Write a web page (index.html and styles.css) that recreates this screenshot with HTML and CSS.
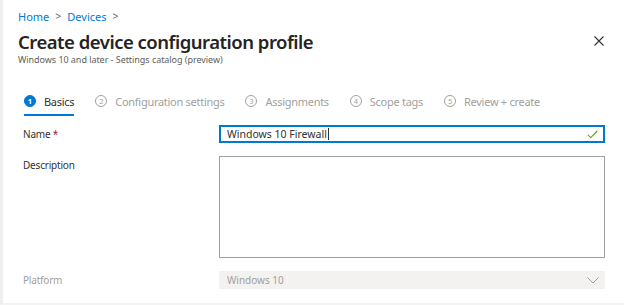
FILE: index.html
```html
<!doctype html>
<html>
	<head>
		<title>Create device configuration profile</title>
		<link rel="stylesheet" href="styles.css">
	</head>

	<body>
		<div class="blade">
			<nav class="crumbs">
				<a href="#">Home</a>
				<span class="sep">&gt;</span>
				<a href="#">Devices</a>
				<span class="sep">&gt;</span>
			</nav>

			<div class="blade-header">
				<div>
					<h1 class="title">Create device configuration profile</h1>
					<div class="subtitle">Windows 10 and later - Settings catalog (preview)</div>
				</div>
				<button class="close-button" aria-label="Close">
					<svg width="10" height="10" viewBox="0 0 10 10">
						<path d="M0.5 0.5 L9.5 9.5 M9.5 0.5 L0.5 9.5" stroke="#323130" stroke-width="1.1" fill="none"></path>
					</svg>
				</button>
			</div>

			<ul class="steps">
				<li class="step active"><span class="step-num">1</span>Basics</li>
				<li class="step"><span class="step-num">2</span>Configuration settings</li>
				<li class="step"><span class="step-num">3</span>Assignments</li>
				<li class="step"><span class="step-num">4</span>Scope tags</li>
				<li class="step"><span class="step-num">5</span>Review + create</li>
			</ul>

			<div class="form">
				<div class="form-row">
					<label class="field-label">Name <span class="req">*</span></label>
					<div class="text-input focused">
						<span class="value">Windows 10 Firewall</span><span class="caret"></span>
						<svg class="check" width="11" height="9" viewBox="0 0 11 9">
							<path d="M0.8 4.8 L3.8 7.6 L10.2 1" stroke="#57a300" stroke-width="1.1" fill="none"></path>
						</svg>
					</div>
				</div>
				<div class="form-row">
					<label class="field-label">Description</label>
					<div class="text-area"></div>
				</div>
				<div class="form-row">
					<label class="field-label disabled">Platform</label>
					<div class="dropdown disabled">
						<span>Windows 10</span>
						<svg width="12" height="7" viewBox="0 0 12 7">
							<path d="M0.5 0.5 L6 6 L11.5 0.5" stroke="#a19f9d" stroke-width="1" fill="none"></path>
						</svg>
					</div>
				</div>
			</div>
		</div>
	</body>
</html>
```

FILE: styles.css
```css
body {
	margin: 0px;
	background-color: #ffffff;
	color: #323130;
	font-family: "Noto Sans", "Open Sans", sans-serif;
}

.blade {
	height: 305px;
	box-sizing: border-box;
	border-left: 3px solid #efefef;
	border-bottom: 2px solid #f3f3f3;
	padding: 7px 19px 0px 15px;
}

.crumbs {
	display: flex;
	align-items: center;
	gap: 6px;
	font-size: 11px;
	height: 18px;
}

.crumbs a {
	color: #0078d4;
	text-decoration: none;
}

.crumbs .sep {
	color: #605e5c;
	font-size: 10.5px;
}

.blade-header {
	display: flex;
	justify-content: space-between;
	align-items: flex-start;
	margin-top: 4px;
}

.title {
	margin: 0px;
	font-size: 18.5px;
	font-weight: 600;
	line-height: 25px;
	color: #252423;
	letter-spacing: -0.5px;
}

.subtitle {
	font-size: 9px;
	line-height: 11px;
	color: #605e5c;
	letter-spacing: -0.05px;
}

.close-button {
	background: none;
	border: none;
	padding: 0px;
	margin-top: 7px;
	margin-right: 1px;
	cursor: pointer;
	display: flex;
}

.steps {
	list-style: none;
	margin: 25px 0px 0px 0px;
	padding: 0px 0px 0px 6px;
	display: flex;
	gap: 21px;
	font-size: 11px;
	letter-spacing: -0.28px;
}

.step {
	display: flex;
	align-items: center;
	gap: 8px;
	height: 22px;
	padding-bottom: 2px;
	color: #a19f9d;
	border-bottom: 2px solid transparent;
}

.step-num {
	width: 10px;
	height: 10px;
	border: 1px solid #a19f9d;
	border-radius: 50%;
	font-size: 7.5px;
	letter-spacing: 0px;
	display: flex;
	align-items: center;
	justify-content: center;
}

.step.active {
	color: #323130;
	border-bottom-color: #0078d4;
}

.step.active .step-num {
	background-color: #0078d4;
	border-color: #0078d4;
	color: #ffffff;
	font-weight: 700;
}

.form {
	padding-left: 5px;
	margin-top: 9px;
	display: flex;
	flex-direction: column;
	gap: 13px;
}

.form-row {
	display: grid;
	grid-template-columns: 196px 1fr;
	align-items: start;
}

.field-label {
	font-size: 10px;
	line-height: 18px;
	letter-spacing: -0.2px;
	color: #323130;
}

.field-label .req {
	color: #a4262c;
}

.field-label.disabled {
	color: #a19f9d;
}

.text-input {
	height: 18px;
	box-sizing: border-box;
	border: 1px solid #8a8886;
	display: flex;
	align-items: center;
	padding: 0px 6px 0px 7px;
	font-size: 10.5px;
}

.text-input.focused {
	border: 2px solid #0078d4;
	padding-left: 6px;
	padding-right: 5px;
}

.text-input .caret {
	width: 1px;
	height: 12px;
	background-color: #323130;
	margin-left: 1px;
}

.text-input .check {
	margin-left: auto;
}

.text-area {
	height: 102px;
	box-sizing: border-box;
	border: 1px solid #a19f9d;
}

.dropdown {
	height: 18px;
	display: flex;
	align-items: center;
	justify-content: space-between;
	padding: 0px 6px 0px 8px;
	font-size: 10px;
}

.dropdown.disabled {
	background-color: #f3f2f1;
	color: #a19f9d;
}
```
